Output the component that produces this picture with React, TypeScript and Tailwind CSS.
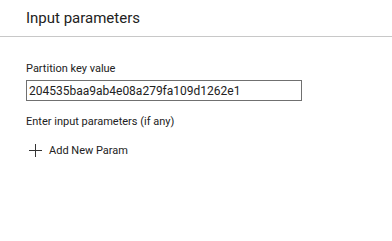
export default function App() {
  return (
    <div className="w-[392px] h-[241px] bg-white font-['Roboto',sans-serif] text-[#222]">
      <div className="h-[37px] border-b border-[#c8c8c8] pl-[26px] pt-[8px]">
        <div className="text-[15px] leading-[20px]">Input parameters</div>
      </div>
      <div className="pl-[26px] pt-[24px]">
        <div className="text-[11px] leading-[15px]">Partition key value</div>
        <div className="mt-[4px] w-[276px] h-[21px] border border-[#707070] flex items-center px-[2px] text-[12px]">
          204535baa9ab4e08a279fa109d1262e1
        </div>
        <div className="mt-[13px] text-[11px] leading-[15px]">Enter input parameters (if any)</div>
        <div className="mt-[14px] flex items-center text-[11px] leading-[15px]">
          <svg width="13" height="13" viewBox="0 0 13 13" className="ml-[3px]">
            <path d="M6.5 0V13M0 6.5H13" stroke="#333" strokeWidth="1" />
          </svg>
          <span className="ml-[7px]">Add New Param</span>
        </div>
      </div>
    </div>
  );
}
